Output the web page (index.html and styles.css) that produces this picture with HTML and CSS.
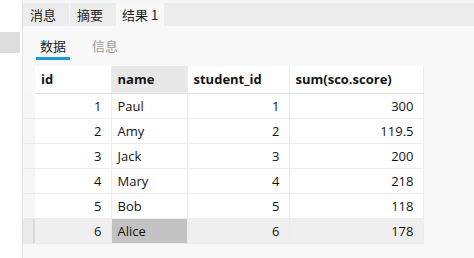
FILE: index.html
```html
<!DOCTYPE html>
<html lang="zh">

<head>
    <meta charset="UTF-8">
    <title>结果 1</title>
    <link rel="stylesheet" href="styles.css">
</head>

<body>
    <div class="side">
        <div class="mark"></div>
    </div>
    <div class="main">
        <div class="tabbar">
            <div class="tab t1">消息</div>
            <div class="tab t2">摘要</div>
            <div class="tab t3 active">结果 1</div>
        </div>
        <div class="panel">
            <div class="subtabs">
                <div class="sub active">数据</div>
                <div class="sub">信息</div>
            </div>
            <table class="grid">
                <colgroup>
                    <col class="c0">
                    <col class="c1">
                    <col class="c2">
                    <col class="c3">
                    <col class="c4">
                </colgroup>
                <thead>
                    <tr>
                        <th class="rh"></th>
                        <th>id</th>
                        <th class="sorted">name</th>
                        <th>student_id</th>
                        <th>sum(sco.score)</th>
                    </tr>
                </thead>
                <tbody>
                    <tr><td class="rh"></td><td class="num">1</td><td>Paul</td><td class="num">1</td><td class="num">300</td></tr>
                    <tr><td class="rh"></td><td class="num">2</td><td>Amy</td><td class="num">2</td><td class="num">119.5</td></tr>
                    <tr><td class="rh"></td><td class="num">3</td><td>Jack</td><td class="num">3</td><td class="num">200</td></tr>
                    <tr><td class="rh"></td><td class="num">4</td><td>Mary</td><td class="num">4</td><td class="num">218</td></tr>
                    <tr><td class="rh"></td><td class="num">5</td><td>Bob</td><td class="num">5</td><td class="num">118</td></tr>
                    <tr class="current"><td class="rh"><span class="marker"></span></td><td class="num">6</td><td class="picked">Alice</td><td class="num">6</td><td class="num">178</td></tr>
                </tbody>
            </table>
        </div>
    </div>
</body>

</html>
```

FILE: styles.css
```css
* {
    margin: 0;
    padding: 0;
    box-sizing: border-box;
}

body {
    display: flex;
    width: 474px;
    height: 258px;
    overflow: hidden;
    background: #fff;
    font-family: "Open Sans", "Noto Sans CJK SC", sans-serif;
    font-size: 13px;
    color: #141414;
}

.side {
    width: 22px;
    flex-shrink: 0;
}

.side .mark {
    margin-top: 32px;
    width: 20px;
    height: 21px;
    background: #dcdcdc;
}

.main {
    flex: 1;
    display: flex;
    flex-direction: column;
    border-left: 1px solid #e2e2e2;
}

.tabbar {
    display: flex;
    height: 27px;
    border-top: 3px solid #f6f6f6;
    border-bottom: 1px solid #e0e0e0;
    background: #ececec;
}

.tab {
    height: 100%;
    padding-left: 7px;
    line-height: 23px;
    font-family: "Noto Sans CJK SC", sans-serif;
    font-size: 13px;
    color: #1c1c1c;
}

.tab.t1 {
    width: 47px;
    border-right: 1px solid #f4f4f4;
}

.tab.t2 {
    width: 46px;
}

.tab.t3 {
    width: 48px;
    padding-left: 6px;
}

.tab.active {
    background: #f8f8f8;
    height: 24px;
}

.panel {
    flex: 1;
    margin-top: -1px;
    background: #f8f8f8;
}

.subtabs {
    display: flex;
    gap: 18px;
    height: 40px;
    padding: 9px 0 0 13px;
}

.sub {
    width: 34px;
    height: 25px;
    text-align: center;
    font-family: "Noto Sans CJK SC", sans-serif;
    font-size: 13px;
    line-height: 21px;
    color: #9a9a9a;
}

.sub.active {
    color: #222;
    border-bottom: 3px solid #1b9ad6;
}

.grid {
    border-collapse: collapse;
    table-layout: fixed;
    width: 400px;
}

.c0 { width: 12px; }
.c1 { width: 76px; }
.c2 { width: 76px; }
.c3 { width: 102px; }
.c4 { width: 134px; }

.grid th,
.grid td {
    height: 25px;
    padding: 0 6px;
    background: #fff;
    border-right: 1px solid #ececec;
    border-bottom: 1px solid #ececec;
    text-align: left;
    white-space: nowrap;
    overflow: hidden;
}

.grid th {
    height: 27px;
    font-weight: bold;
    border-bottom-color: #e2e2e2;
}

.grid th.sorted {
    background: #e8e8e8;
}

.grid .rh {
    padding: 0;
    background: #f6f6f6;
    border-right: none;
    border-bottom-color: #e8e8e8;
}

.grid th.rh {
    background: #f8f8f8;
    border-bottom: none;
}

.grid td.num {
    text-align: right;
    padding-right: 9px;
}

.grid tr.current td {
    background: #efefef;
}

.grid tr.current td.rh {
    position: relative;
    background: #eaeaea;
}

.marker {
    position: absolute;
    top: 0;
    right: 0;
    width: 2px;
    height: 100%;
    background: #d8d8d8;
}

.grid tr.current td.picked {
    background: #c2c2c2;
}
```
